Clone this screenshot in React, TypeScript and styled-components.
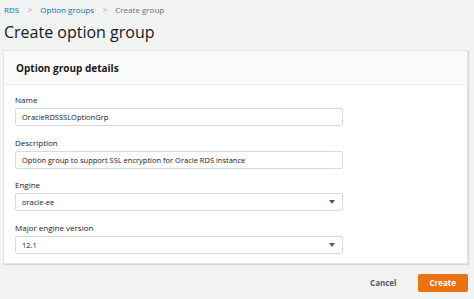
import styled, { createGlobalStyle } from "styled-components";

const GlobalStyle = createGlobalStyle`
  html, body {
    margin: 0;
    padding: 0;
    background: #f2f3f3;
    font-family: "Open Sans", "Noto Sans", Arial, sans-serif;
    color: #16191f;
  }
`;

const Page = styled.div`
  width: 474px;
  height: 299px;
  overflow: hidden;
  display: flex;
  flex-direction: column;
`;

const Breadcrumbs = styled.nav`
  display: flex;
  align-items: center;
  gap: 8px;
  padding: 2px 0 0 4px;
  height: 14px;
  font-size: 8px;
`;

const Crumb = styled.span<{ $link?: boolean }>`
  color: ${(p) => (p.$link ? "#0073bb" : "#687078")};
`;

const Chevron = styled.span`
  color: #aab7b8;
  font-size: 9px;
`;

const Title = styled.h1`
  margin: 5px 0 0 4px;
  font-size: 16px;
  line-height: 22px;
  font-weight: 400;
  color: #16191f;
`;

const Panel = styled.section`
  margin: 7px 6px 0 3px;
  background: #fff;
  border: 1px solid #e3e5e6;
  box-shadow: 1px 1px 1px rgba(0, 0, 0, 0.12);
`;

const PanelHeader = styled.header`
  height: 33px;
  display: flex;
  align-items: center;
  padding-left: 12px;
  background: #fafafa;
  border-bottom: 1px solid #eaeded;
  font-size: 10px;
  font-weight: 700;
`;

const PanelBody = styled.div`
  padding: 9px 11px 9px 11px;
  display: flex;
  flex-direction: column;
  gap: 10.5px;
`;

const Field = styled.div`
  display: flex;
  flex-direction: column;
  gap: 3px;
`;

const Label = styled.label`
  font-size: 8px;
  line-height: 11px;
  color: #16191f;
`;

const InputBox = styled.div`
  width: 328px;
  height: 18px;
  box-sizing: border-box;
  border: 1px solid #d5dbdb;
  border-radius: 2px;
  display: flex;
  align-items: center;
  justify-content: space-between;
  padding: 0 7px 0 6px;
  font-size: 7.5px;
  color: #16191f;
  background: #fff;
`;

const Caret = styled.span`
  width: 0;
  height: 0;
  border-left: 3px solid transparent;
  border-right: 3px solid transparent;
  border-top: 4.5px solid #545b64;
`;

const Footer = styled.footer`
  display: flex;
  justify-content: flex-end;
  align-items: center;
  gap: 21px;
  padding: 10px 6px 0 0;
`;

const Button = styled.button<{ $primary?: boolean }>`
  height: 18px;
  padding: 0 ${(p) => (p.$primary ? "12px" : "0")};
  border: none;
  border-radius: 2px;
  font-family: inherit;
  font-size: 8px;
  font-weight: 700;
  background: ${(p) => (p.$primary ? "#ec7211" : "transparent")};
  color: ${(p) => (p.$primary ? "#fff" : "#545b64")};
`;

const fields: { label: string; value: string; select?: boolean }[] = [
  { label: "Name", value: "OracleRDSSSLOptionGrp" },
  {
    label: "Description",
    value: "Option group to support SSL encryption for Oracle RDS instance",
  },
  { label: "Engine", value: "oracle-ee", select: true },
  { label: "Major engine version", value: "12.1", select: true },
];

export default function App() {
  return (
    <Page>
      <GlobalStyle />
      <Breadcrumbs>
        <Crumb $link>RDS</Crumb>
        <Chevron>&gt;</Chevron>
        <Crumb $link>Option groups</Crumb>
        <Chevron>&gt;</Chevron>
        <Crumb>Create group</Crumb>
      </Breadcrumbs>
      <Title>Create option group</Title>
      <Panel>
        <PanelHeader>Option group details</PanelHeader>
        <PanelBody>
          {fields.map((f) => (
            <Field key={f.label}>
              <Label>{f.label}</Label>
              <InputBox>
                <span>{f.value}</span>
                {f.select && <Caret />}
              </InputBox>
            </Field>
          ))}
        </PanelBody>
      </Panel>
      <Footer>
        <Button>Cancel</Button>
        <Button $primary>Create</Button>
      </Footer>
    </Page>
  );
}
